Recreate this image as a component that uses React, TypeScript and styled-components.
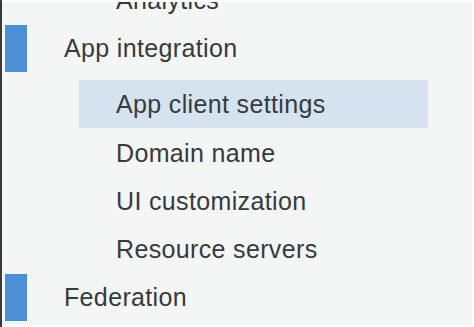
import React from "react";
import styled, { createGlobalStyle } from "styled-components";

const Global = createGlobalStyle`
  html, body { margin: 0; padding: 0; background: #ffffff; }
  body { font-family: "Liberation Sans", Arial, Helvetica, sans-serif; }
`;

const Frame = styled.div`
  width: 474px;
  height: 327px;
  display: flex;
  background: #ffffff;
  overflow: hidden;
`;

const Edge = styled.div`
  width: 2px;
  flex: none;
  background: #3a3a3a;
`;

const Panel = styled.nav`
  width: 470px;
  height: 323px;
  margin-top: 2px;
  background: #f4f6f6;
  overflow: hidden;
`;

const List = styled.ul`
  list-style: none;
  margin: -26px 0 0 0;
  padding: 0;
  display: flex;
  flex-direction: column;
`;

const Section = styled.li`
  display: flex;
  flex-direction: column;
`;

const SectionHead = styled.div`
  height: 48px;
  display: flex;
  align-items: center;
`;

const Marker = styled.span<{ $on: boolean }>`
  width: 22px;
  height: 47px;
  margin-left: 3px;
  flex: none;
  background: ${(p) => (p.$on ? "#4b8fd6" : "transparent")};
`;

const SectionLabel = styled.span`
  margin-left: 37px;
  font-size: 25px;
  letter-spacing: 0.35px;
  color: #363a3d;
  white-space: nowrap;
`;

const SubList = styled.ul<{ $gap: boolean }>`
  list-style: none;
  margin: 0;
  padding: ${(p) => (p.$gap ? "8px 0 0 0" : "0")};
  display: flex;
  flex-direction: column;
`;

const SubItem = styled.li<{ $active: boolean }>`
  height: 48px;
  width: 349px;
  margin-left: 77px;
  margin-bottom: ${(p) => (p.$active ? "1px" : "0")};
  padding-left: 37px;
  box-sizing: border-box;
  display: flex;
  align-items: center;
  font-size: 25px;
  letter-spacing: 0.35px;
  color: #363a3d;
  white-space: nowrap;
  background: ${(p) => (p.$active ? "#d5e3f0" : "transparent")};
`;

type Group = { title?: string; marked: boolean; items: { label: string; active?: boolean }[]; gap: boolean };

const groups: Group[] = [
  { marked: false, items: [{ label: "Analytics" }], gap: false },
  {
    title: "App integration",
    marked: true,
    gap: true,
    items: [
      { label: "App client settings", active: true },
      { label: "Domain name" },
      { label: "UI customization" },
      { label: "Resource servers" },
    ],
  },
  { title: "Federation", marked: true, items: [], gap: false },
];

export default function App() {
  return (
    <>
      <Global />
      <Frame>
        <Edge />
        <Panel>
          <List>
            {groups.map((g, i) => (
              <Section key={i}>
                {g.title && (
                  <SectionHead>
                    <Marker $on={g.marked} />
                    <SectionLabel>{g.title}</SectionLabel>
                  </SectionHead>
                )}
                {g.items.length > 0 && (
                  <SubList $gap={g.gap}>
                    {g.items.map((it) => (
                      <SubItem key={it.label} $active={!!it.active}>
                        {it.label}
                      </SubItem>
                    ))}
                  </SubList>
                )}
              </Section>
            ))}
          </List>
        </Panel>
      </Frame>
    </>
  );
}
